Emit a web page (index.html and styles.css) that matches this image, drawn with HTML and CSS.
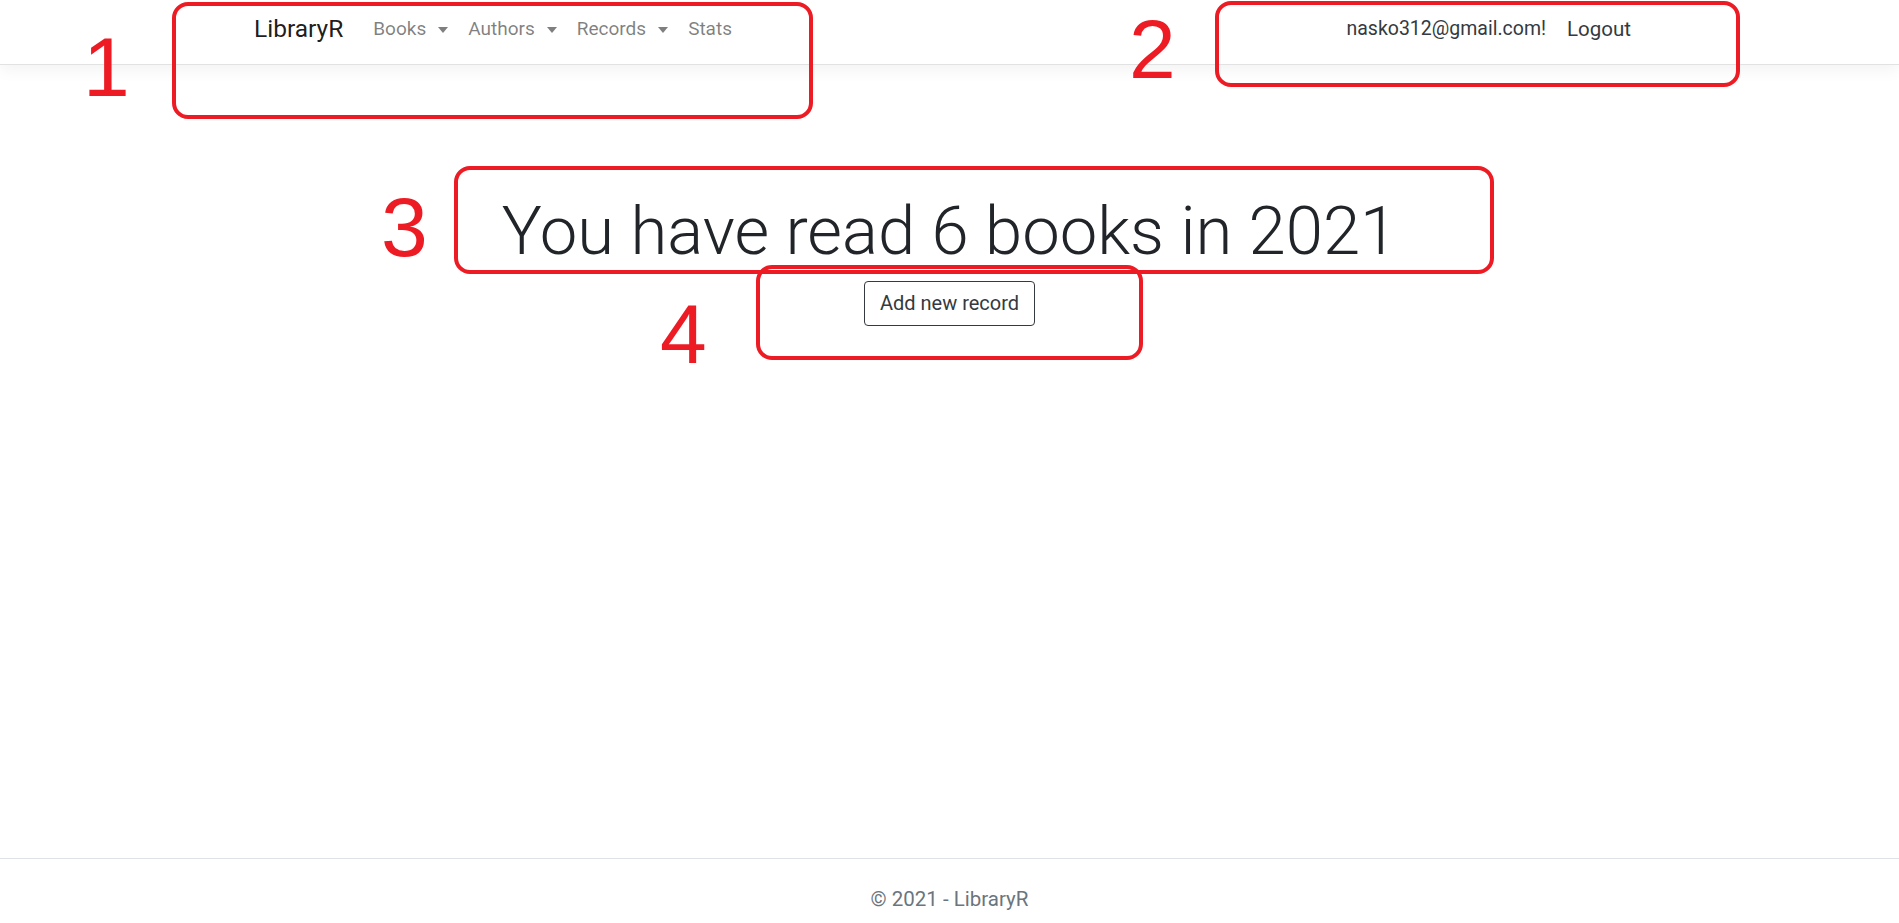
FILE: index.html
```html
<!DOCTYPE html>
<html lang="en">
<head>
  <meta charset="UTF-8">
  <meta name="viewport" content="width=device-width, initial-scale=1.0">
  <title>Home - LibraryR</title>
  <link rel="stylesheet" href="styles.css">
</head>
<body>
  <header class="navbar">
    <div class="container nav-inner">
      <a class="brand" href="#">LibraryR</a>
      <ul class="nav-links">
        <li><a class="nav-link" href="#">Books<span class="caret"></span></a></li>
        <li><a class="nav-link" href="#">Authors<span class="caret"></span></a></li>
        <li><a class="nav-link" href="#">Records<span class="caret"></span></a></li>
        <li><a class="nav-link" href="#">Stats</a></li>
      </ul>
      <ul class="nav-right">
        <li><a class="nav-link dark email" href="#">nasko312@gmail.com!</a></li>
        <li><button class="nav-link dark logout" type="button">Logout</button></li>
      </ul>
    </div>
  </header>

  <main class="container content">
    <h1 class="display">You have read 6 books in 2021</h1>
    <button class="btn-outline" type="button">Add new record</button>
  </main>

  <footer class="footer">
    <div class="container">&copy; 2021 - LibraryR</div>
  </footer>

  <!-- annotation marks drawn over the page -->
  <div class="mark box-1"></div>
  <div class="mark box-2"></div>
  <div class="mark box-3"></div>
  <div class="mark box-4"></div>
  <span class="num num-1">1</span>
  <span class="num num-2">2</span>
  <span class="num num-3">3</span>
  <span class="num num-4">4</span>
</body>
</html>
```

FILE: styles.css
```css
* {
  box-sizing: border-box;
}
html, body {
  height: 100%;
}
body {
  margin: 0;
  font-family: Roboto, "Noto Sans", sans-serif;
  color: #212529;
  background: #fff;
  display: flex;
  flex-direction: column;
  min-height: 923px;
  overflow: hidden;
  position: relative;
}
.container {
  width: 1425px;
  margin: 0 auto;
  padding: 0 19px;
}
a {
  text-decoration: none;
}
.navbar {
  background: #fff;
  border-bottom: 1px solid #e2e2e2;
  box-shadow: 0 5px 15px rgba(0, 0, 0, 0.05);
  padding: 14px 0 20px;
}
.nav-inner {
  display: flex;
  align-items: center;
  height: 30px;
  padding-left: 17px;
  padding-right: 21px;
}
.brand {
  font-size: 24.5px;
  line-height: 30px;
  color: rgba(0, 0, 0, 0.9);
  margin-right: 20px;
}
.nav-links, .nav-right {
  list-style: none;
  margin: 0;
  padding: 0;
  display: flex;
  align-items: center;
}
.nav-right {
  margin-left: auto;
}
.nav-link {
  display: inline-flex;
  align-items: center;
  padding: 0 10px;
  font-size: 19px;
  line-height: 30px;
  color: rgba(0, 0, 0, 0.5);
  font-family: inherit;
}
.nav-link.dark {
  color: #343a40;
}
.email {
  font-size: 19.5px;
}
.logout {
  background: none;
  border: none;
  cursor: pointer;
  color: #212529;
  font-size: 20.5px;
  margin-left: 1px;
}
.caret {
  display: inline-block;
  margin-left: 12px;
  border-top: 6.5px solid rgba(0, 0, 0, 0.5);
  border-left: 5.5px solid transparent;
  border-right: 5.5px solid transparent;
  margin-top: 2px;
}
.content {
  flex: 1;
  text-align: center;
}
.display {
  font-size: 67px;
  font-weight: 300;
  line-height: 1.2;
  margin: 126px 0 0;
  color: #212529;
}
.btn-outline {
  margin-top: 10px;
  font-family: inherit;
  font-size: 20px;
  line-height: 27px;
  padding: 8px 15px;
  color: #343a40;
  background: #fff;
  border: 1px solid #343a40;
  border-radius: 4px;
  cursor: pointer;
}
.footer {
  border-top: 1px solid #dee2e6;
  height: 65px;
  padding-top: 28px;
  line-height: 24px;
  font-size: 20.5px;
  color: #6c757d;
  text-align: center;
}
.mark {
  position: absolute;
  border: 4px solid #ed1c24;
  border-radius: 16px;
}
.box-1 { left: 172px; top: 2px; width: 641px; height: 117px; }
.box-2 { left: 1215px; top: 1px; width: 525px; height: 86px; }
.box-3 { left: 454px; top: 166px; width: 1040px; height: 108px; }
.box-4 { left: 756px; top: 265px; width: 387px; height: 95px; }
.num {
  position: absolute;
  font-family: "Liberation Sans", Arial, sans-serif;
  font-size: 84px;
  line-height: 1;
  color: #ed1c24;
}
.num-1 { left: 83px; top: 25px; }
.num-2 { left: 1129px; top: 7px; }
.num-3 { left: 381px; top: 185px; }
.num-4 { left: 660px; top: 292px; }
```
